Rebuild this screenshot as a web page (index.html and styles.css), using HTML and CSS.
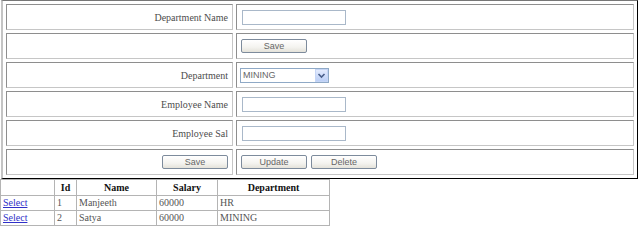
FILE: index.html
```html
<!DOCTYPE html>
<html>
<head>
<meta charset="utf-8">
<title>Employees</title>
<link rel="stylesheet" href="styles.css">
</head>
<body>
<table class="form">
  <tr>
    <td class="lbl">Department Name</td>
    <td class="fld"><input class="txt" type="text"></td>
  </tr>
  <tr>
    <td class="lbl"></td>
    <td class="fld"><button class="btn">Save</button></td>
  </tr>
  <tr>
    <td class="lbl">Department</td>
    <td class="fld">
      <span class="sel">
        <select class="sel-box"><option>MINING</option><option>HR</option></select>
        <span class="arrow"><svg width="9" height="7" viewBox="0 0 9 7"><path d="M1.5 2 L4.5 5 L7.5 2" fill="none" stroke="#4a5f8a" stroke-width="1.6"/></svg></span>
      </span>
    </td>
  </tr>
  <tr>
    <td class="lbl">Employee Name</td>
    <td class="fld"><input class="txt" type="text"></td>
  </tr>
  <tr>
    <td class="lbl">Employee Sal</td>
    <td class="fld"><input class="txt" type="text"></td>
  </tr>
  <tr>
    <td class="lbl"><button class="btn">Save</button></td>
    <td class="fld"><button class="btn">Update</button><button class="btn btn-gap">Delete</button></td>
  </tr>
</table>
<table class="grid">
  <colgroup>
    <col class="c1"><col class="c2"><col class="c3"><col class="c4"><col class="c5">
  </colgroup>
  <tr>
    <th></th><th>Id</th><th>Name</th><th>Salary</th><th>Department</th>
  </tr>
  <tr>
    <td><a href="#" class="link">Select</a></td><td>1</td><td>Manjeeth</td><td>60000</td><td>HR</td>
  </tr>
  <tr>
    <td><a href="#" class="link">Select</a></td><td>2</td><td>Satya</td><td>60000</td><td>MINING</td>
  </tr>
</table>
</body>
</html>
```
FILE: styles.css
```css
html, body {
  margin: 0;
  padding: 0;
  background: #fff;
}
body {
  font-family: "Liberation Serif", "Times New Roman", serif;
  font-size: 10px;
  color: #4d4d4d;
}
.form {
  box-sizing: border-box;
  width: 637px;
  margin: 0 0 0 1px;
  border-collapse: separate;
  border-spacing: 3px;
  border-style: solid;
  border-width: 1px 1px 1px 2px;
  border-color: #777 #000 #000 #c4c4c4;
}
.form td {
  height: 24px;
  padding: 0 4px;
  border: 1px solid;
  border-color: #8e8e8e #c6c6c6 #c6c6c6 #8e8e8e;
  vertical-align: middle;
}
.form td.lbl {
  width: 217px;
  text-align: right;
}
.form td.fld {
  padding-left: 3px;
  text-align: left;
}
.txt {
  box-sizing: border-box;
  width: 104px;
  height: 15px;
  margin: 0 0 0 2px;
  padding: 0 2px;
  border: 1px solid #a9b8c9;
  background: #fff;
  vertical-align: middle;
}
.btn {
  box-sizing: border-box;
  width: 66px;
  height: 14px;
  margin: 0 0 0 1px;
  padding: 0;
  border: 1px solid #7d8b9c;
  border-radius: 2px;
  background: linear-gradient(#ffffff, #f4f3ef 60%, #e4e2da);
  font-family: "Liberation Sans", Arial, sans-serif;
  font-size: 9px;
  line-height: 12px;
  color: #666;
  vertical-align: middle;
}
.lbl .btn {
  margin: 0;
}
.btn-gap {
  margin-left: 4px;
}
.sel {
  position: relative;
  display: inline-block;
  vertical-align: middle;
  width: 89px;
  height: 15px;
}
.sel-box {
  -webkit-appearance: none;
  appearance: none;
  box-sizing: border-box;
  display: block;
  width: 89px;
  height: 15px;
  margin: 0;
  padding: 0 0 0 2px;
  border: 1px solid #8fa9c6;
  border-radius: 0;
  background: #fff;
  font-family: "Liberation Sans", Arial, sans-serif;
  font-size: 9px;
  line-height: 13px;
  color: #666;
}
.arrow {
  position: absolute;
  top: 1px;
  right: 1px;
  box-sizing: border-box;
  width: 13px;
  height: 13px;
  display: flex;
  align-items: center;
  justify-content: center;
  border: 1px solid #c6d6f6;
  background: linear-gradient(#e3ebfd, #bccff6);
  pointer-events: none;
}
.grid {
  table-layout: fixed;
  width: 330px;
  margin: 0;
  border-collapse: collapse;
  font-size: 10px;
  color: #555;
}
.grid .c1 { width: 54px; }
.grid .c2 { width: 22px; }
.grid .c3 { width: 80px; }
.grid .c4 { width: 61px; }
.grid .c5 { width: 112px; }
.grid th, .grid td {
  height: 14px;
  padding: 0 2px;
  border: 1px solid #b4b4b4;
  line-height: 14px;
  white-space: nowrap;
  overflow: hidden;
}
.grid th {
  font-weight: bold;
  text-align: center;
  color: #111;
  height: 15px;
}
.grid td {
  text-align: left;
}
.link {
  color: #3030c8;
  text-decoration: underline;
}
```
